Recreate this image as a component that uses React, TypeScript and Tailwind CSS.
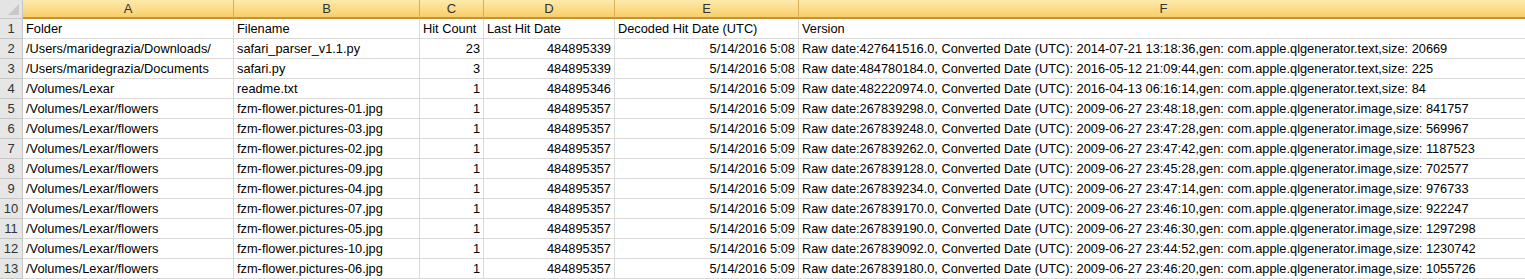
import React from 'react'

const cols = ['A', 'B', 'C', 'D', 'E', 'F']
const grid = 'grid grid-cols-[23px_211px_186px_64px_131px_184px_730px]'

type Row = [string, string, string, string, string, string]

const rows: Row[] = [
  ['Folder', 'Filename', 'Hit Count', 'Last Hit Date', 'Decoded Hit Date (UTC)', 'Version'],
  ['/Users/maridegrazia/Downloads/', 'safari_parser_v1.1.py', '23', '484895339', '5/14/2016 5:08', 'Raw date:427641516.0, Converted Date (UTC): 2014-07-21 13:18:36,gen: com.apple.qlgenerator.text,size: 20669'],
  ['/Users/maridegrazia/Documents', 'safari.py', '3', '484895339', '5/14/2016 5:08', 'Raw date:484780184.0, Converted Date (UTC): 2016-05-12 21:09:44,gen: com.apple.qlgenerator.text,size: 225'],
  ['/Volumes/Lexar', 'readme.txt', '1', '484895346', '5/14/2016 5:09', 'Raw date:482220974.0, Converted Date (UTC): 2016-04-13 06:16:14,gen: com.apple.qlgenerator.text,size: 84'],
  ['/Volumes/Lexar/flowers', 'fzm-flower.pictures-01.jpg', '1', '484895357', '5/14/2016 5:09', 'Raw date:267839298.0, Converted Date (UTC): 2009-06-27 23:48:18,gen: com.apple.qlgenerator.image,size: 841757'],
  ['/Volumes/Lexar/flowers', 'fzm-flower.pictures-03.jpg', '1', '484895357', '5/14/2016 5:09', 'Raw date:267839248.0, Converted Date (UTC): 2009-06-27 23:47:28,gen: com.apple.qlgenerator.image,size: 569967'],
  ['/Volumes/Lexar/flowers', 'fzm-flower.pictures-02.jpg', '1', '484895357', '5/14/2016 5:09', 'Raw date:267839262.0, Converted Date (UTC): 2009-06-27 23:47:42,gen: com.apple.qlgenerator.image,size: 1187523'],
  ['/Volumes/Lexar/flowers', 'fzm-flower.pictures-09.jpg', '1', '484895357', '5/14/2016 5:09', 'Raw date:267839128.0, Converted Date (UTC): 2009-06-27 23:45:28,gen: com.apple.qlgenerator.image,size: 702577'],
  ['/Volumes/Lexar/flowers', 'fzm-flower.pictures-04.jpg', '1', '484895357', '5/14/2016 5:09', 'Raw date:267839234.0, Converted Date (UTC): 2009-06-27 23:47:14,gen: com.apple.qlgenerator.image,size: 976733'],
  ['/Volumes/Lexar/flowers', 'fzm-flower.pictures-07.jpg', '1', '484895357', '5/14/2016 5:09', 'Raw date:267839170.0, Converted Date (UTC): 2009-06-27 23:46:10,gen: com.apple.qlgenerator.image,size: 922247'],
  ['/Volumes/Lexar/flowers', 'fzm-flower.pictures-05.jpg', '1', '484895357', '5/14/2016 5:09', 'Raw date:267839190.0, Converted Date (UTC): 2009-06-27 23:46:30,gen: com.apple.qlgenerator.image,size: 1297298'],
  ['/Volumes/Lexar/flowers', 'fzm-flower.pictures-10.jpg', '1', '484895357', '5/14/2016 5:09', 'Raw date:267839092.0, Converted Date (UTC): 2009-06-27 23:44:52,gen: com.apple.qlgenerator.image,size: 1230742'],
  ['/Volumes/Lexar/flowers', 'fzm-flower.pictures-06.jpg', '1', '484895357', '5/14/2016 5:09', 'Raw date:267839180.0, Converted Date (UTC): 2009-06-27 23:46:20,gen: com.apple.qlgenerator.image,size: 1055726'],
]

// first row is text headers, numbers are right aligned below it
const rightCols = [2, 3, 4]

export default function App() {
  return (
    <div className="w-[1525px] h-[279px] overflow-hidden bg-white font-['Liberation_Sans',sans-serif] text-[12.8px] text-black leading-none">
      {/* Column letters */}
      <div className={`${grid} h-[19px]`}>
        <div className="bg-[#e4e4e4] border-r border-b border-[#c6c6c6] flex items-end justify-end p-[3px]">
          <svg width="11" height="11" viewBox="0 0 11 11">
            <polygon points="11,0 11,11 0,11" fill="#c9c9c9" />
          </svg>
        </div>
        {cols.map(c => (
          <div
            key={c}
            className="bg-gradient-to-b from-[#fdeaab] to-[#f8cf68] border-r border-[#dcae5a] border-b-2 border-b-[#c68f34] flex items-center justify-center text-[#333] text-[13px]"
          >
            {c}
          </div>
        ))}
      </div>

      {/* Data rows */}
      {rows.map((row, i) => (
        <div key={i} className={`${grid} h-[20px]`}>
          <div className="bg-[#e6e6e6] border-r border-b border-[#c6c6c6] flex items-center justify-center text-[#333] text-[13px]">
            {i + 1}
          </div>
          {row.map((cell, j) => (
            <div
              key={j}
              className={`border-r border-b border-[#dadada] flex items-center pt-[1px] px-[3px] overflow-hidden whitespace-nowrap ${
                i > 0 && rightCols.includes(j) ? 'justify-end' : 'justify-start'
              }`}
            >
              {cell}
            </div>
          ))}
        </div>
      ))}
    </div>
  )
}
